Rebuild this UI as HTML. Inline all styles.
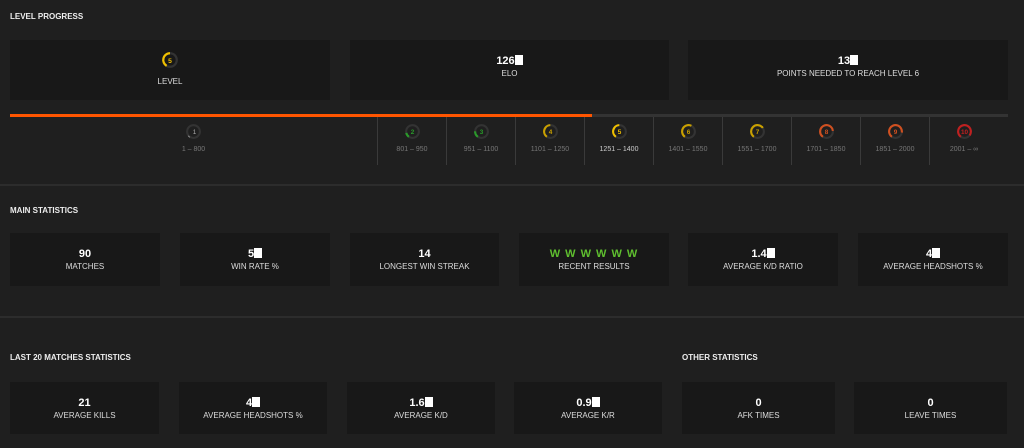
<!DOCTYPE html><html><head><style>
body{margin:0;width:1024px;height:448px;background:#1f1f1f;font-family:"Liberation Sans",sans-serif;color:#fff;position:relative;overflow:hidden}
.a{position:absolute}
.t{position:absolute;font-size:8px;font-weight:bold;color:#eee}
.c{position:absolute;background:#181818;text-align:center}
.v{font-size:11px;font-weight:bold;color:#fff}
.l{font-size:8px;color:#ddd;margin-top:2px}
.sq{display:inline-block;width:8px;height:10px;background:#fff;vertical-align:-1px}
.seg{position:absolute;top:117px;height:48px;border-left:1px solid #3a3a3a;text-align:center;font-size:7px;color:#777}
.seg svg{display:block;margin:6px auto 6px}
.hr{position:absolute;left:0;width:1024px;height:2px;background:#2c2c2c}
</style></head><body>
<div class="t" style="left:10px;top:12px">LEVEL PROGRESS</div>
<div class="c" style="left:10px;top:40px;width:320px;height:60px"><svg width="18" height="18" style="margin-top:11px" viewBox="0 0 16 16"><circle cx="8" cy="8" r="6" fill="none" stroke="#333" stroke-width="2"/><path d="M8 2A6 6 0 0 0 5 13.2" fill="none" stroke="#f0c000" stroke-width="2"/><text x="8" y="10.5" font-size="6" fill="#f0c000" text-anchor="middle" font-weight="bold" font-family="Liberation Sans">5</text></svg><div class="l" style="margin-top:3px">LEVEL</div></div>
<div class="c" style="left:350px;top:40px;width:319px;height:60px"><div class="v" style="margin-top:15px">126<span class="sq"></span></div><div class="l">ELO</div></div>
<div class="c" style="left:688px;top:40px;width:320px;height:60px"><div class="v" style="margin-top:15px">13<span class="sq"></span></div><div class="l">POINTS NEEDED TO REACH LEVEL 6</div></div>
<div class="a" style="left:10px;top:114px;width:998px;height:3px;background:#333"></div>
<div class="a" style="left:10px;top:114px;width:582px;height:3px;background:#ff5500"></div>
<div class="seg" style="left:10px;width:367px;border:none"><svg width="17" height="17" viewBox="0 0 16 16"><circle cx="8" cy="8" r="6" fill="none" stroke="#333" stroke-width="2"/><path d="M4 12.5L3.5 13" stroke="#aaa" stroke-width="2"/><text x="9" y="10.5" font-size="6" fill="#aaa" text-anchor="middle">1</text></svg>1 – 800</div>
<div id="segs"></div>
<script>
var d=[["2","801 – 950","#2a9a2a",0.15],["3","951 – 1100","#2a9a2a",0.2],["4","1101 – 1250","#c9a000",0.5],["5","1251 – 1400","#f0c000",0.5],["6","1401 – 1550","#c9a000",0.6],["7","1551 – 1700","#c9a000",0.7],["8","1701 – 1850","#d05020",0.8],["9","1851 – 2000","#d05020",0.85],["10","2001 – ∞","#c02020",0.95]];
var h="";d.forEach(function(s,i){var x=377+i*69;var a=s[3]*2*Math.PI*0.8;
var x1=8+6*Math.cos(Math.PI/2+0.6),y1=8+6*Math.sin(Math.PI/2+0.6);
var ang=Math.PI/2+0.6+a;var x2=8+6*Math.cos(ang),y2=8+6*Math.sin(ang);
h+='<div class="seg" style="left:'+x+'px;width:68px;'+(i==3?'color:#ccc':'')+'"><svg width="17" height="17" viewBox="0 0 16 16"><circle cx="8" cy="8" r="6" fill="none" stroke="#333" stroke-width="2"/><path d="M'+x1.toFixed(2)+' '+y1.toFixed(2)+'A6 6 0 '+(a>Math.PI?1:0)+' 1 '+x2.toFixed(2)+' '+y2.toFixed(2)+'" fill="none" stroke="'+s[2]+'" stroke-width="2"/><text x="8" y="10.5" font-size="6" fill="'+s[2]+'" text-anchor="middle" font-weight="bold" font-family="Liberation Sans">'+s[0]+'</text></svg>'+s[1]+'</div>';});
document.getElementById("segs").innerHTML=h;
</script>
<div class="hr" style="top:184px"></div>
<div class="t" style="left:10px;top:206px">MAIN STATISTICS</div>
<div class="c" style="left:10px;top:233px;width:150px;height:53px"><div class="v" style="margin-top:15px">90</div><div class="l">MATCHES</div></div>
<div class="c" style="left:180px;top:233px;width:150px;height:53px"><div class="v" style="margin-top:15px">5<span class="sq"></span></div><div class="l">WIN RATE %</div></div>
<div class="c" style="left:350px;top:233px;width:149px;height:53px"><div class="v" style="margin-top:15px">14</div><div class="l">LONGEST WIN STREAK</div></div>
<div class="c" style="left:519px;top:233px;width:150px;height:53px"><div class="v" style="margin-top:15px;color:#5fbf2f;letter-spacing:1px">W W W W W W</div><div class="l">RECENT RESULTS</div></div>
<div class="c" style="left:688px;top:233px;width:150px;height:53px"><div class="v" style="margin-top:15px">1.4<span class="sq"></span></div><div class="l">AVERAGE K/D RATIO</div></div>
<div class="c" style="left:858px;top:233px;width:150px;height:53px"><div class="v" style="margin-top:15px">4<span class="sq"></span></div><div class="l">AVERAGE HEADSHOTS %</div></div>
<div class="hr" style="top:316px"></div>
<div class="t" style="left:10px;top:353px">LAST 20 MATCHES STATISTICS</div>
<div class="t" style="left:682px;top:353px">OTHER STATISTICS</div>
<div class="c" style="left:10px;top:382px;width:149px;height:52px"><div class="v" style="margin-top:15px">21</div><div class="l">AVERAGE KILLS</div></div>
<div class="c" style="left:179px;top:382px;width:148px;height:52px"><div class="v" style="margin-top:15px">4<span class="sq"></span></div><div class="l">AVERAGE HEADSHOTS %</div></div>
<div class="c" style="left:347px;top:382px;width:148px;height:52px"><div class="v" style="margin-top:15px">1.6<span class="sq"></span></div><div class="l">AVERAGE K/D</div></div>
<div class="c" style="left:514px;top:382px;width:148px;height:52px"><div class="v" style="margin-top:15px">0.9<span class="sq"></span></div><div class="l">AVERAGE K/R</div></div>
<div class="c" style="left:682px;top:382px;width:153px;height:52px"><div class="v" style="margin-top:15px">0</div><div class="l">AFK TIMES</div></div>
<div class="c" style="left:854px;top:382px;width:153px;height:52px"><div class="v" style="margin-top:15px">0</div><div class="l">LEAVE TIMES</div></div>
</body></html>
